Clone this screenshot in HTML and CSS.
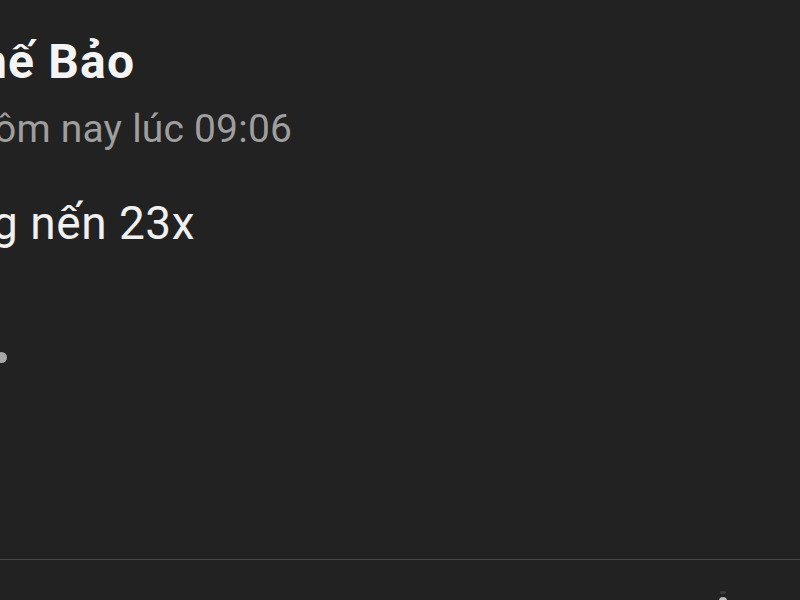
FILE: index.html
```html
<!DOCTYPE html>
<html lang="vi">
<head>
    <meta charset="UTF-8">
    <meta name="viewport" content="width=device-width, initial-scale=1.0">
    <title>Bài viết</title>
    <link rel="stylesheet" href="styles.css">
</head>
<body>

    <!-- Post content -->
    <main class="post">
        <h1 class="author">Thế Bảo</h1>
        <div class="time">Hôm nay lúc 09:06</div>
        <p class="message">Đúng nến 23x</p>
        <span class="dot"></span>
    </main>

    <!-- Bottom action bar -->
    <footer class="actions">
        <svg class="action-icon" width="16" height="16" viewBox="0 0 16 16">
            <rect x="5" y="0" width="6" height="3" rx="1" fill="#3a3a3a"/>
            <circle cx="8" cy="10" r="4" fill="#bdbdbd"/>
        </svg>
    </footer>

</body>
</html>
```

FILE: styles.css
```css
/* General styling */
html, body {
    height: 100%;
}

body {
    margin: 0;
    background-color: #222222;
    font-family: Roboto, "Noto Sans", sans-serif;
    color: #f2f2f2;
    display: flex;
    flex-direction: column;
    overflow: hidden;
}

/* Post styling */
.post {
    flex: 1;
    display: flex;
    flex-direction: column;
    align-items: flex-start;
    padding-top: 34px;
    margin-left: -34px;
}

.author {
    margin: 0 0 0 -17px;
    font-size: 48px;
    line-height: 56px;
    font-weight: 700;
    letter-spacing: 1.2px;
    color: #f4f4f4;
    white-space: nowrap;
}

.time {
    margin-top: 16px;
    font-size: 39px;
    line-height: 46px;
    letter-spacing: 0.2px;
    color: #9e9e9e;
    white-space: nowrap;
}

.message {
    margin: 44px 0 0 -57px;
    font-size: 46px;
    line-height: 54px;
    letter-spacing: 0.5px;
    color: #f0f0f0;
    white-space: nowrap;
}

.dot {
    margin: 102px 0 0 30px;
    width: 11px;
    height: 11px;
    border-radius: 50%;
    background-color: #a8a8a8;
}

/* Footer styling */
.actions {
    box-sizing: border-box;
    height: 41px;
    border-top: 1px solid #474747;
    display: flex;
    justify-content: flex-end;
    align-items: flex-start;
    padding: 31px 69px 0 0;
}
```
